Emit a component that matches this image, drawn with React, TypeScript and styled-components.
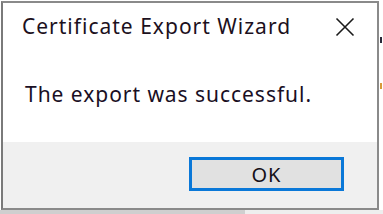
import React from 'react';
import styled, { createGlobalStyle } from 'styled-components';

const GlobalStyle = createGlobalStyle`
    html, body {
        margin: 0;
        padding: 0;
        background: #ffffff;
    }
    body {
        font-family: "Noto Sans", "Open Sans", "DejaVu Sans", sans-serif;
        -webkit-font-smoothing: antialiased;
    }
`;

const Screen = styled.div`
    width: 383px;
    height: 214px;
    overflow: hidden;
    display: flex;
    flex-direction: column;
    background: #ffffff;
`;

const Desk = styled.div`
    display: flex;
    flex-direction: row;
    padding: 1px 0 0 1px;
`;

const Dialog = styled.div`
    width: 374px;
    height: 205px;
    display: flex;
    flex-direction: column;
    background: #ffffff;
    border: 2px solid #8a8a8a;
    border-left-color: #7a7a7a;
`;

const TitleBar = styled.div`
    display: flex;
    align-items: center;
    justify-content: space-between;
    height: 46px;
    padding: 0 20px 0 19px;
`;

const Title = styled.span`
    font-size: 21px;
    color: #1c1020;
    letter-spacing: 1px;
    margin-top: 0;
`;

const CloseButton = styled.button`
    width: 24px;
    height: 24px;
    padding: 0;
    border: none;
    background: transparent;
    display: flex;
    align-items: center;
    justify-content: center;
    margin-top: 1px;
`;

const Body = styled.div`
    flex: 1;
    padding: 31px 22px 0;
`;

const Message = styled.p`
    margin: 0;
    font-size: 21px;
    color: #1a0f24;
    letter-spacing: 0.96px;
`;

const Footer = styled.div`
    height: 66px;
    background: #f0f0f0;
    display: flex;
    justify-content: flex-end;
    align-items: flex-start;
    padding: 15px 33px 0 0;
    box-sizing: border-box;
`;

const Button = styled.button`
    width: 155px;
    height: 34px;
    box-sizing: border-box;
    border: 3px solid #0a78d8;
    background: #e1e1e1;
    font-family: inherit;
    font-size: 20px;
    color: #151018;
    padding: 0;
    letter-spacing: 1px;
`;

const SideStrip = styled.div`
    flex: 1;
    display: flex;
    flex-direction: column;
    align-items: flex-start;
    padding: 36px 0 0 1px;
    gap: 40px;
`;

const SideMark = styled.span<{ $color: string }>`
    width: 2px;
    height: 6px;
    background: ${p => p.$color};
`;

const Shelf = styled.div`
    display: flex;
    height: 4px;
`;

const ShelfPart = styled.div<{ $w: number; $color: string }>`
    width: ${p => p.$w}px;
    background: ${p => p.$color};
`;

const App: React.FC = () => {
    return (
        <Screen>
            <GlobalStyle />
            <Desk>
                <Dialog>
                    <TitleBar>
                        <Title>Certificate Export Wizard</Title>
                        <CloseButton aria-label="Close">
                            <svg width="20" height="20" viewBox="0 0 20 20">
                                <path d="M1.5 1.5 L18.5 18.5 M18.5 1.5 L1.5 18.5" stroke="#1a1a1a" strokeWidth="1.6" />
                            </svg>
                        </CloseButton>
                    </TitleBar>
                    <Body>
                        <Message>The export was successful.</Message>
                    </Body>
                    <Footer>
                        <Button>OK</Button>
                    </Footer>
                </Dialog>
                <SideStrip>
                    <SideMark $color="#2a2a3a" />
                    <SideMark $color="#d89a3a" />
                </SideStrip>
            </Desk>
            <Shelf>
                <ShelfPart $w={245} $color="#cfcfcf" />
                <ShelfPart $w={138} $color="#eeeeee" />
            </Shelf>
        </Screen>
    );
};

export default App;
